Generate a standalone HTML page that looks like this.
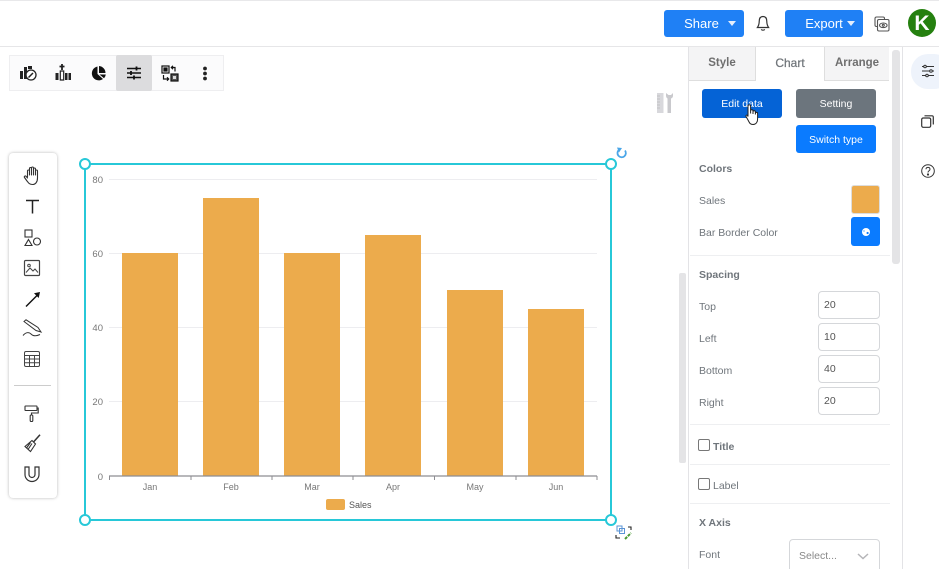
<!DOCTYPE html>
<html><head><meta charset="utf-8">
<style>
html,body{margin:0;padding:0;background:#fff;width:939px;height:569px;overflow:hidden}
#w{width:939px;height:569px;position:relative;overflow:hidden;font-family:"Liberation Sans",sans-serif;color:#6c757d;background:#fff}
.a{position:absolute}
.btn{position:absolute;border-radius:3px;color:#fff;text-align:center;font-size:10.5px}
.tx{position:relative;top:1px}
.lbl{position:absolute;left:699px;font-size:10.5px;color:#6f757b;line-height:14px;margin-top:1px}
.hd{position:absolute;left:699px;font-size:10.5px;font-weight:bold;color:#6f757b;line-height:14px;margin-top:1px}
.inp{position:absolute;left:818px;width:60px;height:26px;border:1px solid #d5d7da;border-radius:4px;font-size:10.5px;color:#555;line-height:26px;text-indent:5px;background:#fff}
.hr{position:absolute;left:690px;width:200px;height:1px;background:#eeeff1}
.tab{position:absolute;top:47px;height:34px;text-align:center;font-size:11.5px;font-weight:bold;line-height:32px;color:#6f6f6f;box-sizing:border-box}
.cb{position:absolute;left:698px;width:10px;height:10px;border:1px solid #777;border-radius:2px;background:#fff}
svg{position:absolute;overflow:visible}
</style></head><body><div id="w">
<!-- top bar -->
<div class="a" style="left:0;top:0;width:939px;height:1px;background:#e8e8ea"></div>
<div class="a" style="left:0;top:46px;width:939px;height:1px;background:#e6e6e8"></div>
<div class="btn" style="left:664px;top:10px;width:80px;height:27px;background:#1f80f5;font-size:13px;line-height:27px;text-indent:-5px">Share</div>
<div class="a" style="left:728px;top:21px;border-left:4.5px solid transparent;border-right:4.5px solid transparent;border-top:5px solid #e4eefc"></div>
<div class="btn" style="left:785px;top:10px;width:78px;height:27px;background:#1f80f5;font-size:13px;line-height:27px;text-indent:0">Export</div>
<div class="a" style="left:847px;top:21px;border-left:4.5px solid transparent;border-right:4.5px solid transparent;border-top:5px solid #e4eefc"></div>
<svg style="left:755px;top:15px" width="16" height="17" viewBox="0 0 16 17" fill="none" stroke="#333" stroke-width="1.2"><path d="M8 1.5C5.2 1.5 4.2 3.8 4.2 6.5C4.2 9.5 3.4 11 2.4 12.5H13.6C12.6 11 11.8 9.5 11.8 6.5C11.8 3.8 10.8 1.5 8 1.5Z"/><path d="M6.3 14.3C6.8 15.5 9.2 15.5 9.7 14.3"/></svg>
<svg style="left:874px;top:16px" width="16" height="16" viewBox="0 0 16 16" fill="none" stroke="#555" stroke-width="1.1"><path d="M3.5 10.5H2.5A1.5 1.5 0 0 1 1 9V2.5A1.5 1.5 0 0 1 2.5 1H9A1.5 1.5 0 0 1 10.500 2.500V3.500"/><rect x="3.500" y="3.500" width="11.500" height="11.500" rx="1.500"/><ellipse cx="9.300" cy="9.300" rx="3.800" ry="2.300"/><circle cx="9.300" cy="9.300" r="1"/></svg>
<div class="a" style="left:908px;top:9px;width:28px;height:28px;border-radius:50%;background:#25800f;color:#fff;font-weight:bold;font-size:21px;line-height:29px;text-align:center">K</div>
<!-- context toolbar -->
<div class="a" style="left:9px;top:55px;width:215px;height:36px;background:#fbfbfc;border:1px solid #eeeef0;box-sizing:border-box"></div>
<div class="a" style="left:116px;top:55px;width:36px;height:36px;background:#dcdcde;border-radius:2px"></div>
<svg style="left:19px;top:64px" width="18" height="18" viewBox="0 0 18 18" fill="#222"><rect x="1" y="7" width="3" height="8"/><rect x="5" y="3" width="3" height="12"/><path d="M9 2h4v3H9z"/><circle cx="12" cy="11" r="5" fill="#fff" stroke="#222" stroke-width="1.300"/><path d="M9.500 13.500L14 9" stroke="#222" stroke-width="1.500"/></svg>
<svg style="left:54px;top:63px" width="18" height="18" viewBox="0 0 18 18" fill="#222"><rect x="1.500" y="10" width="3" height="7"/><path d="M6.300 8h3.400v9H6.300z" fill="none" stroke="#222" stroke-width="1.200"/><rect x="11" y="10" width="2.500" height="7"/><rect x="14.500" y="10" width="2.500" height="7"/><path d="M8 1v6M5.500 3.500h5" stroke="#222" stroke-width="1.800"/></svg>
<svg style="left:90px;top:65px" width="17" height="17" viewBox="0 0 17 17" fill="#111"><path d="M7.500 1.500V9l5.500 5A7 7 0 1 1 7.500 1.500Z"/><path d="M9 1a7 7 0 0 1 6.500 7H9Z"/><path d="M9.500 9.500h6.300a7 7 0 0 1-1.800 3.800Z"/></svg>
<svg style="left:126px;top:66px" width="16" height="14" viewBox="0 0 16 14" fill="none" stroke="#111" stroke-width="1.500"><path d="M1 2.500H15M1 7H15M1 11.500H15"/><path d="M10.500 .5v4M5 5v4M8 9.500v4" stroke-width="1.800"/></svg>
<svg style="left:161px;top:65px" width="18" height="17" viewBox="0 0 18 17" fill="none" stroke="#111" stroke-width="1.200"><rect x="1" y="1" width="7" height="7"/><rect x="3" y="3" width="3" height="3" fill="#111"/><rect x="10" y="9" width="7" height="7" fill="#555"/><rect x="12" y="11" width="3" height="3" fill="#ddd" stroke="none"/><path d="M10.500 2.500h3.500v4M12 .8L10.300 2.500L12 4.200"/><path d="M2.500 10v4h5M6 12.300L7.700 14L6 15.700"/></svg>
<svg style="left:201px;top:66px" width="8" height="15" viewBox="0 0 8 15" fill="#222"><circle cx="4" cy="2.500" r="1.900"/><circle cx="4" cy="7.500" r="1.900"/><circle cx="4" cy="12.500" r="1.900"/></svg>
<!-- tool toolbar -->
<div class="a" style="left:9px;top:153px;width:48px;height:345px;background:#fff;border-radius:4px;box-shadow:0 0 3px rgba(0,0,0,.28)"></div>
<svg style="left:23px;top:166px" width="18" height="20" viewBox="0 0 18 20" fill="none" stroke="#333" stroke-width="1.100" stroke-linejoin="round" stroke-linecap="round"><path d="M4.500 11V5a1 1 0 0 1 2 0V9M6.500 9V2.500a1 1 0 0 1 2 0V9M8.500 9V2a1 1 0 0 1 2 0V9M10.500 9V3a1 1 0 0 1 2 0V9M12.500 9V5a1 1 0 0 1 2 0v7c0 4-2 6.500-5 6.500-3 0-4-1.500-5.500-3.500L1.500 11.500c-.7-1 .7-2 1.500-1.300L4.500 12"/></svg>
<svg style="left:25px;top:199px" width="15" height="15" viewBox="0 0 15 15" fill="none" stroke="#222" stroke-width="1.500"><path d="M1 1.500H14M7.500 1.500V14.500"/></svg>
<svg style="left:24px;top:229px" width="18" height="18" viewBox="0 0 18 18" fill="none" stroke="#333" stroke-width="1.100"><rect x="1" y="1" width="7" height="7"/><path d="M4.500 10.500L8 16.500H1Z"/><circle cx="13" cy="12.500" r="3.500"/></svg>
<svg style="left:24px;top:260px" width="16" height="16" viewBox="0 0 16 16" fill="none" stroke="#444" stroke-width="1"><rect x=".5" y=".5" width="15" height="15" rx="1" stroke-width="1.200"/><circle cx="5" cy="5.500" r="1.300"/><path d="M2 12.500L6 8l3 3 2-2 3 3.500"/></svg>
<svg style="left:25px;top:291px" width="16" height="16" viewBox="0 0 16 16" fill="#111"><path d="M1 15.500L12 4.500" stroke="#111" stroke-width="1.400"/><path d="M15 1L13.700 7L9 2.300Z"/></svg>
<svg style="left:22px;top:319px" width="21" height="19" viewBox="0 0 21 19" fill="none" stroke="#333" stroke-width="1"><path d="M2 2.500L4 .8L16 8.500L19 13L14 11.500Z"/><path d="M1 16.500C4 13 7 13 9 15C11 17 14 17.500 18 15.500"/></svg>
<svg style="left:24px;top:351px" width="16" height="16" viewBox="0 0 16 16" fill="none" stroke="#444" stroke-width="1"><rect x=".5" y=".5" width="15" height="15" rx="1.500"/><path d="M.5 4.500H15.500M.5 8H15.500M.5 11.800H15.500M5.500 4.500V15.500M10.500 4.500V15.500"/></svg>
<div class="a" style="left:14px;top:385px;width:37px;height:1px;background:#ccc"></div>
<svg style="left:24px;top:405px" width="15" height="17" viewBox="0 0 15 17" fill="none" stroke="#333" stroke-width="1.100"><rect x="1" y="1" width="12" height="4.500" rx=".5"/><path d="M13 3h1.200V8H7.500V10"/><rect x="6.200" y="10" width="2.600" height="6.500" rx="1"/></svg>
<svg style="left:24px;top:434px" width="17" height="19" viewBox="0 0 17 19" fill="none" stroke="#333" stroke-width="1.100"><path d="M16 .8L9.500 8" stroke-width="1.500"/><path d="M8 6.500L11.500 10L6.500 17.500L1 12.500Z" fill="#fff"/><path d="M4 15.500L8 9.500M2.500 14L6.500 8.500"/></svg>
<svg style="left:24px;top:466px" width="16" height="16" viewBox="0 0 16 16" fill="none" stroke="#333" stroke-width="1.200"><path d="M1 1H5V8.500A3 3 0 0 0 11 8.500V1H15V8.500A7 7 0 0 1 1 8.500Z"/></svg>
<!-- chart -->
<svg style="left:0;top:0" width="939" height="569" viewBox="0 0 939 569">
<g stroke="#ededf0" stroke-width="1"><path d="M109 179.500H597M109 253.500H597M109 327.500H597M109 401.500H597"/></g>
<g fill="#ecab4c"><rect x="122" y="253" width="56" height="223"/><rect x="203" y="198" width="56" height="278"/><rect x="284" y="253" width="56" height="223"/><rect x="365" y="235" width="56" height="241"/><rect x="447" y="290" width="56" height="186"/><rect x="528" y="309" width="56" height="167"/></g>
<path d="M109 476H597" stroke="#8d8d92" stroke-width="1.200"/>
<path d="M109.500 476v4M191 476v4M272 476v4M353 476v4M434.500 476v4M516 476v4M597 476v4" stroke="#8d8d92" stroke-width="1"/>
<g font-family="Liberation Sans" font-size="9.500" fill="#777" text-anchor="end"><text x="103" y="183">80</text><text x="103" y="257">60</text><text x="103" y="331">40</text><text x="103" y="405">20</text><text x="103" y="480">0</text></g>
<g font-family="Liberation Sans" font-size="9" fill="#777" text-anchor="middle"><text x="150" y="490">Jan</text><text x="231" y="490">Feb</text><text x="312" y="490">Mar</text><text x="393" y="490">Apr</text><text x="475" y="490">May</text><text x="556" y="490">Jun</text></g>
<rect x="326" y="499" width="19" height="11" rx="2" fill="#ecab4c"/>
<text x="349" y="508" font-family="Liberation Sans" font-size="9" fill="#555">Sales</text>
<rect x="85" y="164" width="526" height="356" fill="none" stroke="#27c8d8" stroke-width="2"/>
<g fill="#fff" stroke="#27c8d8" stroke-width="2"><circle cx="85" cy="164" r="5"/><circle cx="611" cy="164" r="5"/><circle cx="85" cy="520" r="5"/><circle cx="611" cy="520" r="5"/></g>
<path d="M618.800 150A4.200 4.200 0 1 0 625 150.500" fill="none" stroke="#4aa6e8" stroke-width="1.800"/><path d="M617 147.500L622 148L619 152.500Z" fill="#4aa6e8"/>
<g fill="none" stroke="#5b94d6" stroke-width="1"><rect x="617" y="526" width="5" height="5"/><rect x="619.500" y="528.500" width="5" height="5"/></g>
<path d="M628 527h3v3M616 535v3h4" fill="none" stroke="#222" stroke-width="1.100"/>
<path d="M625 539l6-6" stroke="#4a9a32" stroke-width="2" stroke-dasharray="3 1"/>
</svg>
<svg style="left:656px;top:92px" width="18" height="21" viewBox="0 0 18 21"><path d="M1 1h6.500v20H1z" fill="#d8d8dc"/><path d="M1 4h3M1 7h3M1 10h3M1 13h3M1 16h3" stroke="#bbb" stroke-width=".8"/><path d="M10 1v3a3 3 0 0 0 1.500 2.500V21h3.500V6.500A3 3 0 0 0 17 4V1L15 3H12.500Z" fill="#c9c9cd"/></svg>
<!-- left scrollbar -->
<div class="a" style="left:679px;top:273px;width:7px;height:190px;background:#e4e4e6;border-radius:2px"></div>
<!-- panel -->
<div class="a" style="left:688px;top:47px;width:1px;height:522px;background:#e3e3e6"></div>
<div class="a" style="left:902px;top:47px;width:1px;height:522px;background:#e3e3e6"></div>
<div class="a" style="left:892px;top:50px;width:8px;height:214px;background:#e4e4e6;border-radius:3px"></div>
<div class="tab" style="left:689px;width:67px;background:#f4f4f5;border-bottom:1px solid #dedede;border-right:1px solid #dedede">Style</div>
<div class="tab" style="left:756px;width:68px;font-weight:normal;font-size:12px;-webkit-text-stroke:.25px #70757a;color:#70757a;line-height:33px">Chart</div>
<div class="tab" style="left:824px;width:65px;background:#f4f4f5;border-bottom:1px solid #dedede;border-left:1px solid #dedede">Arrange</div>
<div class="btn" style="left:702px;top:89px;width:80px;height:29px;background:#0563d6;line-height:29px"><span class="tx">Edit data</span></div>
<div class="btn" style="left:796px;top:89px;width:80px;height:29px;background:#6c757d;line-height:29px"><span class="tx">Setting</span></div>
<div class="btn" style="left:796px;top:125px;width:80px;height:28px;background:#0a7bff;line-height:28px"><span class="tx">Switch type</span></div>
<svg style="left:745px;top:104px" width="15" height="22" viewBox="0 0 15 22" fill="#fff" stroke="#222" stroke-width="1"><path d="M3 2a1.300 1.300 0 0 1 2.600 0V9.500V7a1.200 1.200 0 0 1 2.400 0v3V8a1.200 1.200 0 0 1 2.400 0v2.500V9.500a1.100 1.100 0 0 1 2.200 0V15c0 3-1.500 5.500-4.500 5.500S4.500 19 3 16L1 12.500c-.5-1 .8-2 1.500-1L3 12.500Z"/></svg>
<div class="hd" style="top:161px">Colors</div>
<div class="lbl" style="top:193px">Sales</div>
<div class="a" style="left:851px;top:185px;width:29px;height:29px;background:#ecab4c;border-radius:3px;border:1px solid #ddd;box-sizing:border-box"></div>
<div class="lbl" style="top:225px">Bar Border Color</div>
<div class="a" style="left:851px;top:217px;width:29px;height:29px;background:#0a7bff;border-radius:3px"></div>
<svg style="left:862px;top:228px" width="8" height="8" viewBox="0 0 8 8"><circle cx="4" cy="4" r="4" fill="#fff"/><circle cx="5.600" cy="5" r="1.100" fill="#0a7bff"/><circle cx="2" cy="3" r=".6" fill="#0a7bff"/></svg>
<div class="hr" style="top:255px"></div>
<div class="hd" style="top:267px">Spacing</div>
<div class="lbl" style="top:299px">Top</div><div class="inp" style="top:291px">20</div>
<div class="lbl" style="top:331px">Left</div><div class="inp" style="top:323px">10</div>
<div class="lbl" style="top:363px">Bottom</div><div class="inp" style="top:355px">40</div>
<div class="lbl" style="top:395px">Right</div><div class="inp" style="top:387px">20</div>
<div class="hr" style="top:424px"></div>
<div class="cb" style="top:439px"></div><div class="hd" style="left:713px;top:439px">Title</div>
<div class="hr" style="top:464px"></div>
<div class="cb" style="top:478px"></div><div class="lbl" style="left:713px;top:478px">Label</div>
<div class="hr" style="top:503px"></div>
<div class="hd" style="top:515px">X Axis</div>
<div class="lbl" style="top:547px">Font</div>
<div class="a" style="left:789px;top:539px;width:89px;height:40px;border:1px solid #d5d7da;border-radius:4px;font-size:10.5px;line-height:32px;text-indent:9px;color:#888">Select...</div>
<svg style="left:857px;top:553px" width="12" height="7" viewBox="0 0 12 7" fill="none" stroke="#b5b5b8" stroke-width="1.500"><path d="M1 1L6 5.500L11 1"/></svg>
<!-- right rail -->
<div class="a" style="left:911px;top:54px;width:40px;height:35px;border-radius:17px;background:#eef3fb"></div>
<svg style="left:921px;top:64px" width="14" height="14" viewBox="0 0 14 14" fill="none" stroke="#333" stroke-width="1"><path d="M1 2.500H13M1 7H13M1 11.500H13"/><circle cx="4" cy="2.500" r="1.300" fill="#eef3fb"/><circle cx="10" cy="7" r="1.300" fill="#eef3fb"/><circle cx="6" cy="11.500" r="1.300" fill="#eef3fb"/></svg>
<svg style="left:921px;top:115px" width="13" height="13" viewBox="0 0 13 13" fill="none" stroke="#333" stroke-width="1.200"><rect x=".7" y="3" width="9" height="9.300" rx="1.500"/><path d="M3.500 .8H11a1.300 1.300 0 0 1 1.300 1.300V9.500"/></svg>
<svg style="left:921px;top:164px" width="14" height="14" viewBox="0 0 14 14" fill="none" stroke="#333" stroke-width="1"><circle cx="7" cy="7" r="6.300"/><path d="M5 5.300C5 2.800 9 2.800 9 5.300C9 6.800 7 6.800 7 8.500"/><circle cx="7" cy="10.500" r=".6" fill="#333"/></svg>
</div></body></html>
